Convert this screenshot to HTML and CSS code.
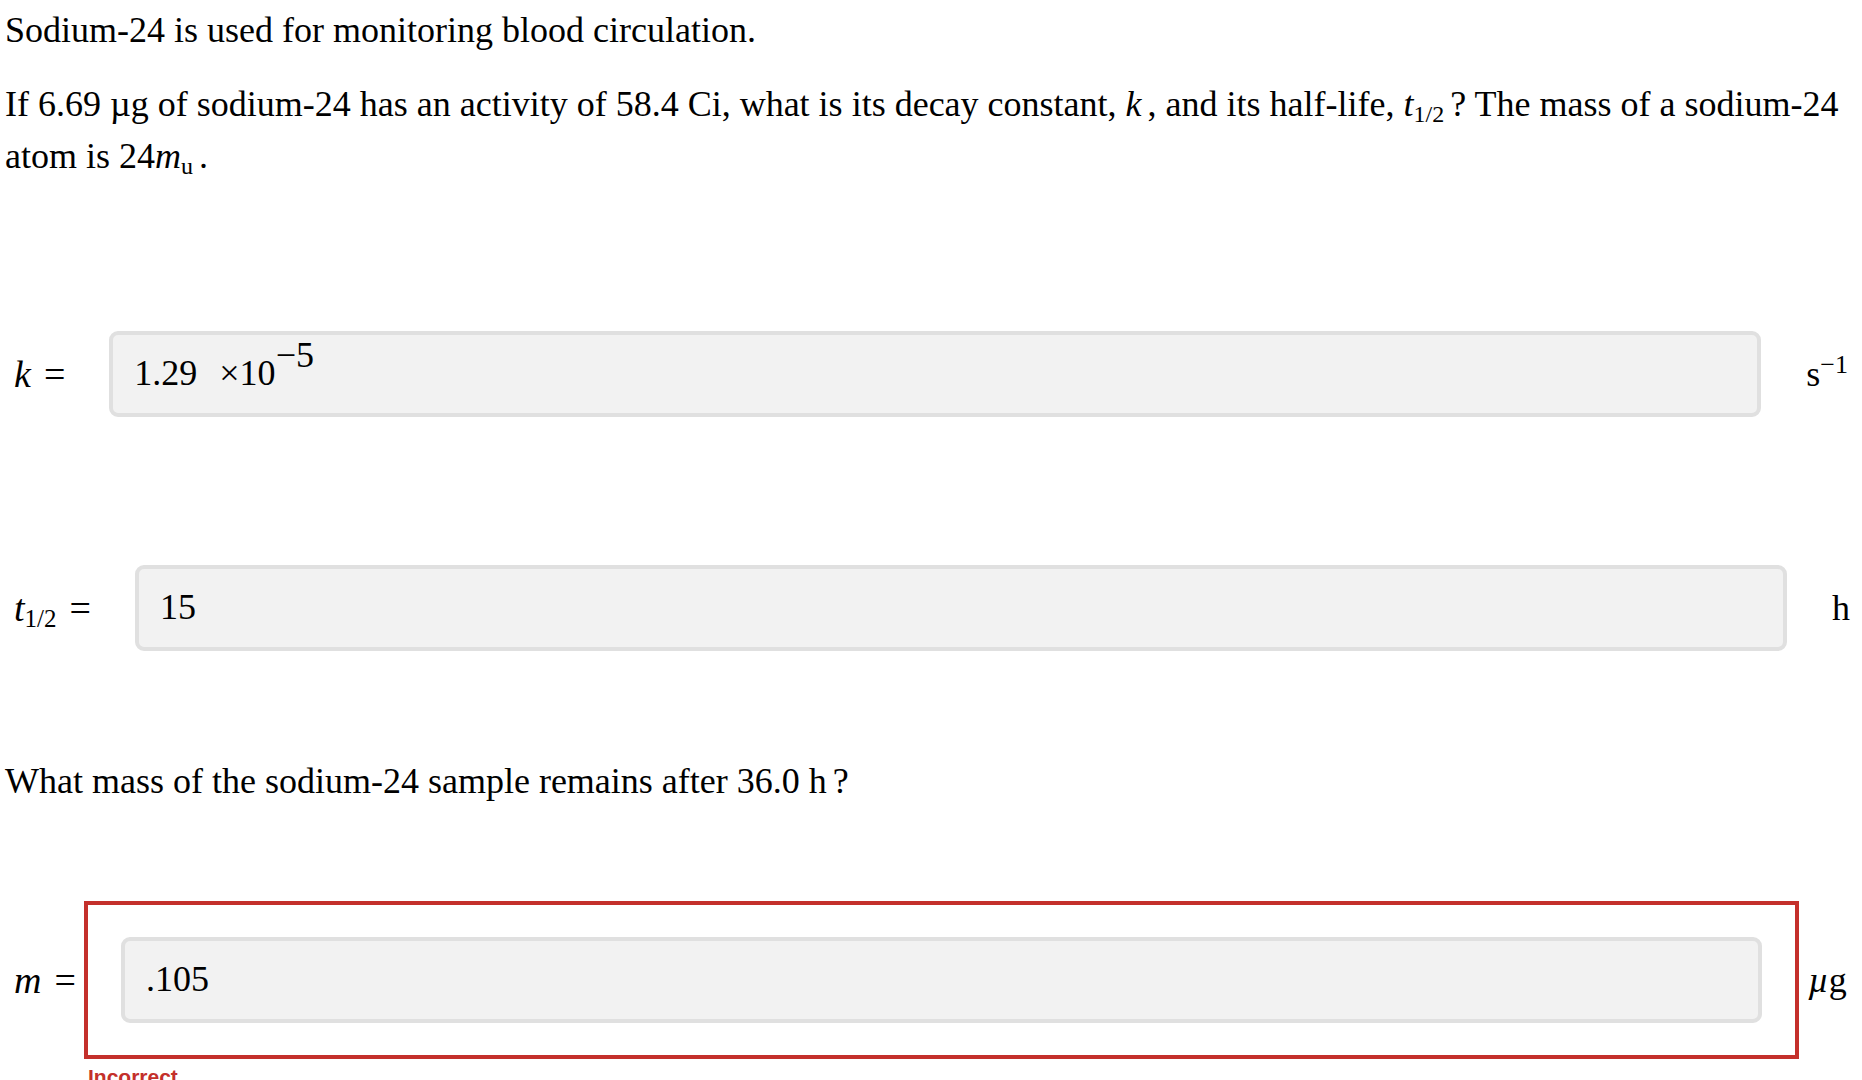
FILE: index.html
```html
<!DOCTYPE html>
<html lang="en">
<head>
<meta charset="utf-8">
<title>Sodium-24 decay</title>
<link rel="stylesheet" href="styles.css">
</head>
<body>
<div class="page">
  <p class="para">Sodium-24 is used for monitoring blood circulation.</p>
  <p class="para">If 6.69 µg of sodium-24 has an activity of 58.4 Ci, what is its decay constant, <span class="math"><i>k</i></span>, and its half-life, <span class="math"><i>t</i><sub>1/2</sub></span>? The mass of a sodium-24 atom is 24<span class="math"><i>m</i><sub>u</sub></span>.</p>

  <div class="row row-k">
    <span class="label"><i>k</i><span class="eq">=</span></span>
    <div class="field">1.29<span class="mult">×10<sup>−5</sup></span></div>
    <span class="unit">s<sup>−1</sup></span>
  </div>

  <div class="row row-t">
    <span class="label"><i>t</i><sub>1/2</sub><span class="eq">=</span></span>
    <div class="field">15</div>
    <span class="unit">h</span>
  </div>

  <p class="para para-mass">What mass of the sodium-24 sample remains after 36.0 <span class="math">h</span>?</p>

  <div class="row row-m">
    <span class="label"><i>m</i><span class="eq">=</span></span>
    <div class="answer-box">
      <div class="field field-m">.105</div>
    </div>
    <span class="unit"><i>µ</i>g</span>
  </div>
  <div class="feedback">Incorrect</div>
</div>
</body>
</html>
```
FILE: styles.css
```css
html, body {
  margin: 0;
  padding: 0;
  background: #ffffff;
}

body {
  font-family: "Liberation Serif", "Times New Roman", serif;
  font-size: 36px;
  color: #000000;
}

.page {
  padding: 4px 5px 0 5px;
}

.para {
  margin: 0;
  line-height: 52px;
}

.para + .para {
  margin-top: 22px;
}

.math {
  margin-right: 6px;
}

.math i,
.label i {
  font-style: italic;
}

sub {
  font-size: 24px;
  line-height: 0;
  vertical-align: -6px;
}

.row {
  display: flex;
  align-items: center;
  padding-left: 9px;
}

.row-k {
  margin-top: 149px;
}

.row-t {
  margin-top: 148px;
}

.para-mass {
  margin-top: 104px;
}

.row-m {
  margin-top: 94px;
}

.label {
  white-space: nowrap;
  margin-right: 44px;
  line-height: 52px;
  font-size: 38px;
}

.label sub {
  font-size: 25px;
}

.eq {
  margin-left: 13px;
}

.field {
  box-sizing: border-box;
  width: 1652px;
  height: 86px;
  border: 4px solid #e0e0e0;
  border-radius: 9px;
  background: #f2f2f2;
  padding: 12px 21px 0 21px;
  line-height: 52px;
  white-space: nowrap;
}

.mult {
  margin-left: 22px;
}

.field sup {
  font-size: 36px;
  line-height: 0;
  vertical-align: 18px;
}

.unit {
  margin-left: 45px;
  white-space: nowrap;
  line-height: 52px;
}

.unit sup {
  font-size: 26px;
  line-height: 0;
  vertical-align: 13px;
}

.unit i {
  font-style: italic;
}

.answer-box {
  border: 4px solid #c4302b;
  padding: 32px 33px;
}

.field-m {
  width: 1641px;
}

.row-m .label {
  margin-right: 8px;
}

.row-m .unit {
  margin-left: 9px;
}

.feedback {
  margin: 6px 0 0 83px;
  font-family: "Liberation Sans", Arial, sans-serif;
  font-size: 21px;
  font-weight: 700;
  color: #c4302b;
  line-height: 24px;
}
```
